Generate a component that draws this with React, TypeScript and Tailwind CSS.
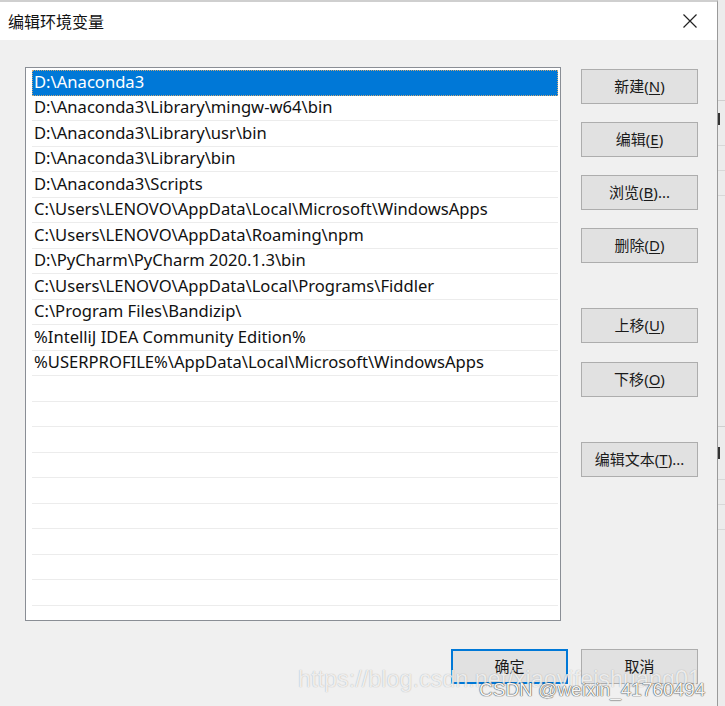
import React from "react";

const paths = [
  "D:\\Anaconda3",
  "D:\\Anaconda3\\Library\\mingw-w64\\bin",
  "D:\\Anaconda3\\Library\\usr\\bin",
  "D:\\Anaconda3\\Library\\bin",
  "D:\\Anaconda3\\Scripts",
  "C:\\Users\\LENOVO\\AppData\\Local\\Microsoft\\WindowsApps",
  "C:\\Users\\LENOVO\\AppData\\Roaming\\npm",
  "D:\\PyCharm\\PyCharm 2020.1.3\\bin",
  "C:\\Users\\LENOVO\\AppData\\Local\\Programs\\Fiddler",
  "C:\\Program Files\\Bandizip\\",
  "%IntelliJ IDEA Community Edition%",
  "%USERPROFILE%\\AppData\\Local\\Microsoft\\WindowsApps",
];

const rows = [...paths, ...Array(10).fill("")];

function Btn({ label, keyChar, suffix = "", className = "" }: { label: string; keyChar: string; suffix?: string; className?: string }) {
  return (
    <div
      className={
        "flex h-[35px] w-[117px] items-center justify-center border border-[#adadad] bg-[#e1e1e1] text-[15px] text-[#1a1a1a] " +
        className
      }
    >
      {label}(<span className="underline underline-offset-2">{keyChar}</span>){suffix}
    </div>
  );
}

export default function App() {
  return (
    <div
      className="relative flex h-[706px] w-[725px] overflow-hidden bg-[#f0f0f0]"
      style={{ fontFamily: '"Noto Sans", "Noto Sans CJK SC", sans-serif' }}
    >
      {/* dialog */}
      <div className="flex h-full w-[718px] flex-col border-r border-[#9a9a9a] border-t-2 border-t-[#cfcfcf]">
        <div className="flex h-[38px] shrink-0 items-center justify-between bg-white pl-[8px] pr-[19px]">
          <span className="text-[16px] text-[#111]" style={{ fontFamily: '"Noto Sans CJK SC", sans-serif' }}>
            编辑环境变量
          </span>
          <svg width="16" height="16" viewBox="0 0 16 16">
            <path d="M1.5 1.5 L14.5 14.5 M14.5 1.5 L1.5 14.5" stroke="#222" strokeWidth="1.2" fill="none" />
          </svg>
        </div>

        <div className="flex flex-1 flex-col bg-[#f0f0f0] pl-[25px] pr-[19px] pt-[27px]">
          <div className="flex gap-[20px]">
            {/* list */}
            <div className="h-[554px] w-[537px] overflow-hidden border border-[#8a8e95] bg-white pl-[6px] pr-[2px] pt-[2px]">
              {rows.map((p, i) => (
                <div
                  key={i}
                  className={
                    i === 0
                      ? "flex h-[25.5px] items-center whitespace-nowrap border border-dotted border-[#c9a878] bg-[#0078d7] pl-[1px] text-[16.6px] text-white"
                      : "flex h-[25.5px] items-center whitespace-nowrap border-b border-[#ececec] pl-[2px] text-[16.6px] text-[#111]"
                  }
                >
                  {p}
                </div>
              ))}
            </div>

            {/* side buttons */}
            <div className="flex flex-col pt-[2px]">
              <Btn label="新建" keyChar="N" />
              <Btn label="编辑" keyChar="E" className="mt-[18px]" />
              <Btn label="浏览" keyChar="B" suffix="..." className="mt-[18px]" />
              <Btn label="删除" keyChar="D" className="mt-[18px]" />
              <Btn label="上移" keyChar="U" className="mt-[45px]" />
              <Btn label="下移" keyChar="O" className="mt-[19px]" />
              <Btn label="编辑文本" keyChar="T" suffix="..." className="mt-[45px]" />
            </div>
          </div>

          <div className="mt-[28px] flex justify-end gap-[13px]">
            <div className="flex h-[35px] w-[117px] items-center justify-center border-2 border-[#0078d7] bg-[#e1e1e1] text-[15px] text-[#1a1a1a]">
              确定
            </div>
            <div className="flex h-[35px] w-[117px] items-center justify-center border border-[#adadad] bg-[#e1e1e1] text-[15px] text-[#1a1a1a]">
              取消
            </div>
          </div>
        </div>
      </div>

      {/* window behind */}
      <div className="flex flex-1 flex-col bg-[#ececec] pt-[100px]">
        <div className="h-[1px] bg-[#cfcfcf]" />
        <div className="mt-[12px] h-[12px] w-[4px] border-l-2 border-[#333]" />
        <div className="mt-[20px] h-[1px] bg-[#d8d8d8]" />
        <div className="mt-[24px] h-[1px] bg-[#d8d8d8]" />
        <div className="mt-[24px] h-[1px] bg-[#d8d8d8]" />
        <div className="mt-[230px] h-[1px] bg-[#cfcfcf]" />
        <div className="mt-[20px] h-[12px] w-[4px] border-l-2 border-[#333]" />
        <div className="mt-[20px] h-[1px] bg-[#d8d8d8]" />
        <div className="mt-[24px] h-[1px] bg-[#d8d8d8]" />
        <div className="mt-[24px] h-[1px] bg-[#d8d8d8]" />
      </div>

      {/* watermark */}
      <div
        className="pointer-events-none absolute left-[298px] top-[662px] whitespace-nowrap text-[23.4px] text-white/80 [text-shadow:0_0_1px_rgba(0,0,0,0.35)]"
        style={{ fontFamily: '"Liberation Sans", Arial, sans-serif' }}
      >
        https://blog.csdn.net/xiaoyifeishuang01
      </div>
      <div
        className="pointer-events-none absolute left-[479px] top-[676px] whitespace-nowrap text-[19px] text-[#f4f4f4] [text-shadow:0_0_1px_#333,0_0_1px_#333]"
        style={{ fontFamily: '"Liberation Sans", Arial, sans-serif' }}
      >
        CSDN @weixin_41760494
      </div>
    </div>
  );
}
